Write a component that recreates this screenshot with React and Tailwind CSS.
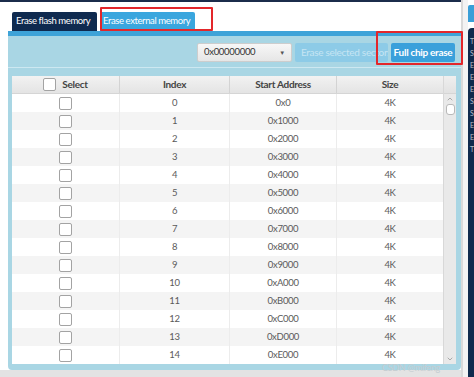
import { ChevronUp, ChevronDown } from 'lucide-react';

const rows = Array.from({ length: 15 }, (_, i) => ({
  index: i,
  address: i === 0 ? '0x0' : `0x${(i * 0x1000).toString(16).toUpperCase()}`,
  size: '4K',
}));

function Checkbox() {
  return <div className="w-[13px] h-[13px] rounded-[2px] border border-[#a3a3a3] bg-white" />;
}

function App() {
  return (
    <div className="w-[474px] h-[377px] bg-white relative overflow-hidden flex font-['Lato',sans-serif] tracking-[-0.3px] whitespace-nowrap">
      {/* main window */}
      <div className="w-[461px] flex flex-col">
        <div className="h-[2px] bg-[#1b2c4b]" />
        <div className="h-[29px] flex items-end pl-[12px] gap-[3px]">
          <div className="h-[19px] w-[85px] px-[4px] flex items-center bg-[#0f2a4f] text-white text-[9.5px] tracking-[-0.4px] rounded-t-[2px] overflow-hidden">
            Erase flash memory
          </div>
          <div className="h-[19px] w-[95px] px-[3px] flex items-center bg-[#3aa6de] text-white text-[9.5px] tracking-[-0.4px] rounded-t-[2px] overflow-hidden">
            Erase external memory
          </div>
        </div>

        <div className="ml-[8px] h-[339px] bg-[#a9d6e4] border-t-[5px] border-[#3ea3d8] rounded-b-[4px] flex flex-col">
          {/* toolbar */}
          <div className="pt-[7px] h-[26px] flex justify-end gap-[3px] pr-[6px]">
            <div className="w-[95px] h-[19px] flex items-center justify-between px-[6px] bg-gradient-to-b from-[#f7f7f7] to-[#e6e6e6] border border-[#cdcdcd] rounded-[2px] text-[9.5px] text-[#333]">
              <span>0x00000000</span>
              <span className="text-[6px] text-[#555]">▼</span>
            </div>
            <div className="w-[93px] h-[19px] flex items-center px-[6px] bg-[#8dcbe7] rounded-[2px] text-[10px] text-[#c6e5f3] overflow-hidden">
              Erase selected sectors
            </div>
            <div className="w-[64px] h-[19px] flex items-center justify-center bg-[#3aa0db] rounded-[2px] text-[10px] font-bold text-white">
              Full chip erase
            </div>
          </div>
          <div className="mt-[5px] h-[1px] bg-[#cde8f1]" />
          <div className="h-[8px]" />

          {/* table */}
          <div className="ml-[4px] w-[444px] flex">
            <div className="w-[431px] flex flex-col">
              <div className="h-[18px] flex bg-gradient-to-b from-[#f2f2f2] to-[#e4e4e4] border-b border-[#d5d5d5] text-[10px] font-bold text-[#444]">
                <div className="w-[108px] flex items-center justify-center gap-[6px] border-r border-[#d3d3d3]">
                  <Checkbox />
                  <span>Select</span>
                </div>
                <div className="w-[110px] flex items-center justify-center border-r border-[#d3d3d3]">Index</div>
                <div className="w-[107px] flex items-center justify-center border-r border-[#d3d3d3]">Start Address</div>
                <div className="w-[106px] flex items-center justify-center">Size</div>
              </div>
              {rows.map(row => (
                <div
                  key={row.index}
                  className={`h-[18px] flex text-[9.5px] text-[#5a5a5a] ${row.index % 2 ? 'bg-[#f4f4f4]' : 'bg-white'}`}
                >
                  <div className="w-[108px] flex items-center justify-center border-r border-[#ececec]">
                    <Checkbox />
                  </div>
                  <div className="w-[110px] flex items-center justify-center border-r border-[#ececec]">{row.index}</div>
                  <div className="w-[107px] flex items-center justify-center border-r border-[#ececec]">{row.address}</div>
                  <div className="w-[106px] flex items-center justify-center">{row.size}</div>
                </div>
              ))}
            </div>
            <div className="w-[13px] flex flex-col bg-[#e9e9e9] border-l border-[#d8d8d8]">
              <div className="h-[18px] bg-gradient-to-b from-[#efefef] to-[#e2e2e2] border-b border-[#d5d5d5]" />
              <div className="flex-1 flex flex-col items-center">
                <ChevronUp size={8} className="text-[#888] mt-[1px]" strokeWidth={2} />
                <div className="w-[9px] h-[11px] mt-[1px] rounded-[3px] border border-[#b8b8b8] bg-white" />
                <div className="flex-1" />
                <ChevronDown size={8} className="text-[#888] mb-[1px]" strokeWidth={2} />
              </div>
            </div>
          </div>
        </div>
        <div className="flex-1 bg-[#e3e3e3]" />
      </div>

      {/* right edge */}
      <div className="w-[2px] bg-[#d9d9d9]" />
      <div className="w-[5px] bg-[#f3f3f3]" />
      <div className="w-[6px] flex flex-col">
        <div className="mt-[5px] h-[17px] bg-[#3a9fd8] rounded-tl-[2px]" />
        <div className="mt-[6px] flex-1 bg-[#0f2a4d] rounded-tl-[4px] pt-[10px] pl-[2px] flex flex-col gap-[5px] text-[7px] leading-[7px] text-white/70 overflow-hidden">
          <span>T</span>
          <span>S</span>
          <span>E</span>
          <span>E</span>
          <span>E</span>
          <span>S</span>
          <span>S</span>
          <span>E</span>
          <span>E</span>
          <span>T</span>
        </div>
      </div>

      {/* annotations */}
      <div className="absolute left-[100px] top-[7px] w-[113px] h-[24px] border-2 border-[#e3262a] rounded-[1px]" />
      <div className="absolute left-[376px] top-[31px] w-[87px] h-[34px] border-2 border-[#e3262a] rounded-[1px]" />
      <div className="absolute left-[382px] top-[361px] text-[9px] text-[#c4ccd0]">
        CSDN @mifeng
      </div>
    </div>
  );
}

export default App;
